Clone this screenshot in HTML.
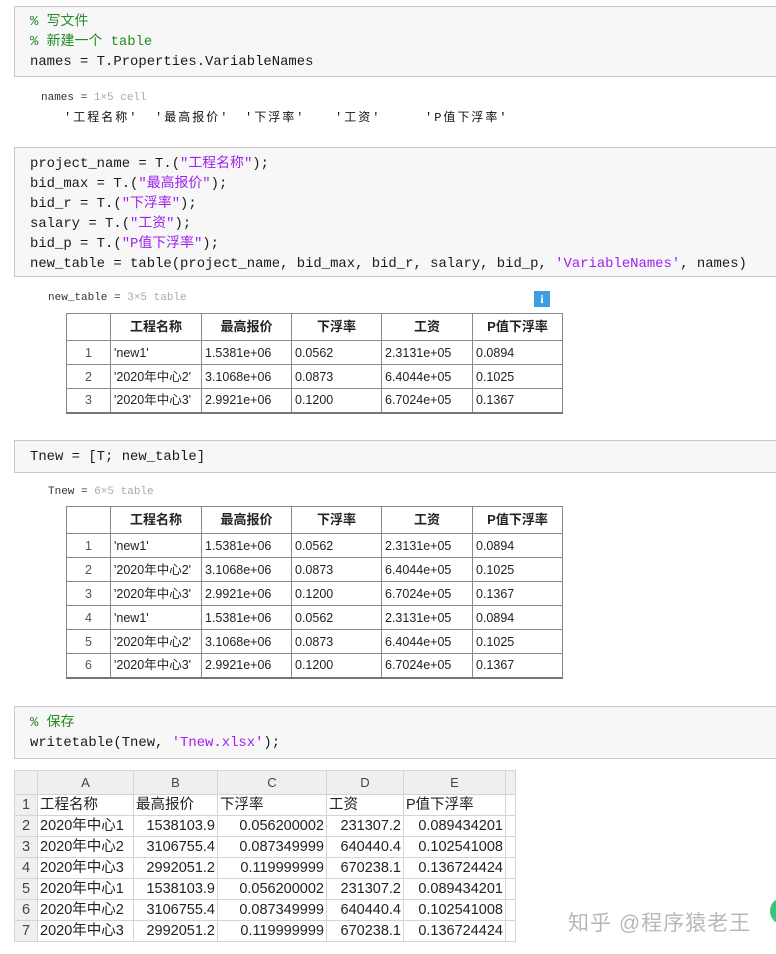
<!DOCTYPE html>
<html><head><meta charset="utf-8"><style>
*{margin:0;padding:0;box-sizing:border-box}
body{width:776px;height:954px;background:#fff;position:relative;overflow:hidden;font-family:"Liberation Sans","Noto Sans CJK SC",sans-serif}
.code{position:absolute;left:14px;width:780px;background:#f7f7f7;border:1px solid #c8c8c8;font-family:"Liberation Mono","Noto Sans CJK SC",monospace;font-size:13.9px;line-height:20px;padding:0 0 0 15px;color:#1a1a1a;white-space:pre}
.cm{color:#228b22}.st{color:#a020f0}
.out{position:absolute;font-family:"Liberation Mono","Noto Sans CJK SC",monospace;font-size:11px;color:#333;white-space:pre}
.g{color:#aaa}
.nm{position:absolute;top:108px;font-size:12px;color:#111;letter-spacing:2px;white-space:nowrap;font-family:"Liberation Mono","Noto Sans CJK SC",monospace}
table.t{position:absolute;left:66px;border-collapse:collapse;font-size:12.5px;color:#222}
table.t td,table.t th{border:1px solid #888;height:24px;line-height:16px;padding:0 3px;white-space:nowrap}
table.t th{height:27px;font-weight:bold;text-align:center;font-size:13px}
table.t td:first-child{text-align:center;color:#555}
table.t{border-bottom:2px solid #777}
.info{position:absolute;left:534px;top:291px;width:16px;height:16px;background:#3c9ee0;color:#fff;font:bold 12px "Liberation Serif",serif;text-align:center;line-height:16px}
table.x{position:absolute;left:14px;top:770px;border-collapse:collapse;font-size:14.5px;color:#222;background:#fff}
table.x td{border:1px solid #d4d4d4;height:21px;line-height:18px;padding:0 2px;white-space:nowrap;text-align:right}
table.x tr:first-child td{background:#efefef;text-align:center;height:24px;font-size:13px;color:#444}
table.x td:first-child{background:#efefef;text-align:center;color:#444}
table.x td.l{text-align:left}
</style></head><body>
<div class="code" style="top:6px;height:71px;padding-top:5px"><span class="cm">% 写文件
% 新建一个 table</span>
names = T.Properties.VariableNames</div>
<div class="out" style="left:41px;top:92px">names = <span class="g">1×5 cell</span></div>
<div class="nm" style="left:64px">'工程名称'</div>
<div class="nm" style="left:155px">'最高报价'</div>
<div class="nm" style="left:245px">'下浮率'</div>
<div class="nm" style="left:335px">'工资'</div>
<div class="nm" style="left:425px">'P值下浮率'</div>
<div class="code" style="top:147px;height:130px;padding-top:6px">project_name = T.(<span class="st">"工程名称"</span>);
bid_max = T.(<span class="st">"最高报价"</span>);
bid_r = T.(<span class="st">"下浮率"</span>);
salary = T.(<span class="st">"工资"</span>);
bid_p = T.(<span class="st">"P值下浮率"</span>);
new_table = table(project_name, bid_max, bid_r, salary, bid_p, <span class="st">'VariableNames'</span>, names)</div>
<div class="out" style="left:48px;top:292px">new_table = <span class="g">3×5 table</span></div>
<div class="info">i</div>
<table class="t" style="top:313px">
<tr><th style="width:44px"></th><th style="width:91px">工程名称</th><th style="width:90px">最高报价</th><th style="width:90px">下浮率</th><th style="width:91px">工资</th><th style="width:90px">P值下浮率</th></tr>
<tr><td>1</td><td>'new1'</td><td>1.5381e+06</td><td>0.0562</td><td>2.3131e+05</td><td>0.0894</td></tr>
<tr><td>2</td><td>'2020年中心2'</td><td>3.1068e+06</td><td>0.0873</td><td>6.4044e+05</td><td>0.1025</td></tr>
<tr><td>3</td><td>'2020年中心3'</td><td>2.9921e+06</td><td>0.1200</td><td>6.7024e+05</td><td>0.1367</td></tr>
</table>
<div class="code" style="top:440px;height:33px;padding-top:6px">Tnew = [T; new_table]</div>
<div class="out" style="left:48px;top:486px">Tnew = <span class="g">6×5 table</span></div>
<table class="t" style="top:506px">
<tr><th style="width:44px"></th><th style="width:91px">工程名称</th><th style="width:90px">最高报价</th><th style="width:90px">下浮率</th><th style="width:91px">工资</th><th style="width:90px">P值下浮率</th></tr>
<tr><td>1</td><td>'new1'</td><td>1.5381e+06</td><td>0.0562</td><td>2.3131e+05</td><td>0.0894</td></tr>
<tr><td>2</td><td>'2020年中心2'</td><td>3.1068e+06</td><td>0.0873</td><td>6.4044e+05</td><td>0.1025</td></tr>
<tr><td>3</td><td>'2020年中心3'</td><td>2.9921e+06</td><td>0.1200</td><td>6.7024e+05</td><td>0.1367</td></tr>
<tr><td>4</td><td>'new1'</td><td>1.5381e+06</td><td>0.0562</td><td>2.3131e+05</td><td>0.0894</td></tr>
<tr><td>5</td><td>'2020年中心2'</td><td>3.1068e+06</td><td>0.0873</td><td>6.4044e+05</td><td>0.1025</td></tr>
<tr><td>6</td><td>'2020年中心3'</td><td>2.9921e+06</td><td>0.1200</td><td>6.7024e+05</td><td>0.1367</td></tr>
</table>
<div class="code" style="top:706px;height:53px;padding-top:6px"><span class="cm">% 保存</span>
writetable(Tnew, <span class="st">'Tnew.xlsx'</span>);</div>
<table class="x">
<tr><td style="width:23px"></td><td style="width:96px">A</td><td style="width:84px">B</td><td style="width:109px">C</td><td style="width:77px">D</td><td style="width:102px">E</td><td style="width:10px"></td></tr>
<tr><td>1</td><td class="l">工程名称</td><td class="l">最高报价</td><td class="l">下浮率</td><td class="l">工资</td><td class="l">P值下浮率</td><td></td></tr>
<tr><td>2</td><td class="l">2020年中心1</td><td>1538103.9</td><td>0.056200002</td><td>231307.2</td><td>0.089434201</td><td></td></tr>
<tr><td>3</td><td class="l">2020年中心2</td><td>3106755.4</td><td>0.087349999</td><td>640440.4</td><td>0.102541008</td><td></td></tr>
<tr><td>4</td><td class="l">2020年中心3</td><td>2992051.2</td><td>0.119999999</td><td>670238.1</td><td>0.136724424</td><td></td></tr>
<tr><td>5</td><td class="l">2020年中心1</td><td>1538103.9</td><td>0.056200002</td><td>231307.2</td><td>0.089434201</td><td></td></tr>
<tr><td>6</td><td class="l">2020年中心2</td><td>3106755.4</td><td>0.087349999</td><td>640440.4</td><td>0.102541008</td><td></td></tr>
<tr><td>7</td><td class="l">2020年中心3</td><td>2992051.2</td><td>0.119999999</td><td>670238.1</td><td>0.136724424</td><td></td></tr>
</table>
<div style="position:absolute;left:568px;top:907px;font-size:21px;letter-spacing:1px;color:#b8b8b8;white-space:nowrap">知乎 @程序猿老王</div>
<div style="position:absolute;left:770px;top:898px;width:24px;height:26px;border-radius:50%;background:#3cc47a"></div>
</body></html>
